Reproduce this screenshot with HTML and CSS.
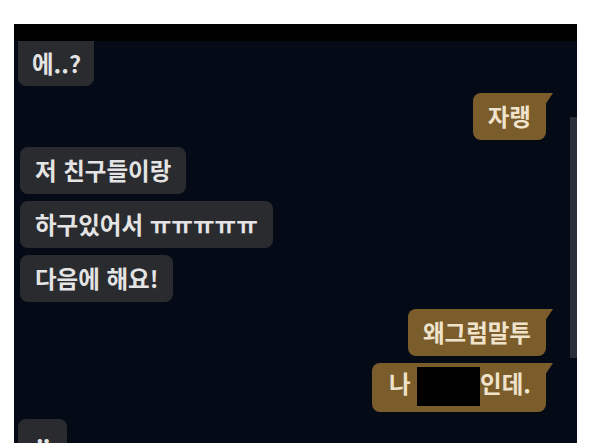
FILE: index.html
```html
<!DOCTYPE html>
<html lang="ko">

<head>
    <meta charset="utf-8">
    <meta name="viewport" content="width=device-width, initial-scale=1.0">
    <title>채팅</title>
    <link rel="stylesheet" href="styles.css">
</head>

<body>
    <main class="chat">
        <div class="topbar"></div>
        <div class="chat_body">
            <section class="messages">
                <p class="bubble other first">에..?</p>
                <p class="bubble me">자랭</p>
                <p class="bubble other">저 친구들이랑</p>
                <p class="bubble other">하구있어서 ㅠㅠㅠㅠㅠ</p>
                <p class="bubble other">다음에 해요!</p>
                <p class="bubble me">왜그럼말투</p>
                <p class="bubble me tall">나 <span class="censor"></span>인데.</p>
                <p class="bubble other last">..</p>
            </section>
            <div class="scroll_track">
                <div class="scroll_thumb"></div>
            </div>
        </div>
    </main>
</body>

</html>
```

FILE: styles.css
```css
* {
    box-sizing: border-box;
}

html,
body {
    height: 100%;
}

body {
    margin: 0;
    padding: 24px 0 0 14px;
    background: #fff;
    overflow: hidden;
    font-family: "Noto Sans CJK KR", "Noto Sans", sans-serif;
}

.chat {
    width: 563px;
    height: 419px;
    background: #050b16;
    display: flex;
    flex-direction: column;
    overflow: hidden;
}

.topbar {
    height: 17px;
    background: #000;
    flex-shrink: 0;
}

.chat_body {
    flex: 1;
    display: flex;
    min-height: 0;
}

.messages {
    flex: 1;
    display: flex;
    flex-direction: column;
    gap: 7px;
    padding: 0 24px 0 4px;
    margin: 0;
}

.bubble {
    position: relative;
    margin: 0;
    padding: 10px 15px;
    font-size: 23.5px;
    line-height: 27px;
    font-weight: 700;
    border-radius: 8px;
    white-space: nowrap;
}

.other {
    align-self: flex-start;
    background: #2a2b2f;
    color: #e4e4e4;
    margin-left: 2px;
}

.other.first {
    border-radius: 0 0 8px 8px;
    margin-left: 0;
    padding: 9px 13px 9px 14px;
}

.other.last {
    margin-left: 0;
    padding: 3px 18px 17px;
    line-height: 22px;
    letter-spacing: -1px;
}

.me {
    align-self: flex-end;
    background: #7b5c2b;
    color: #efe3cb;
    border-top-right-radius: 0;
}

.me::after {
    content: "";
    position: absolute;
    top: 0;
    right: -7px;
    width: 8px;
    height: 12px;
    background: #7b5c2b;
    clip-path: polygon(0 0, 100% 0, 0 100%);
}

.me.tall {
    padding: 4px 15px 6px 17px;
}

.censor {
    display: inline-block;
    width: 63px;
    height: 39px;
    background: #000;
    vertical-align: middle;
    margin-left: 0;
}

.scroll_track {
    width: 7px;
    flex-shrink: 0;
}

.scroll_thumb {
    margin-top: 76px;
    height: 241px;
    background: #2b2f37;
}
```
